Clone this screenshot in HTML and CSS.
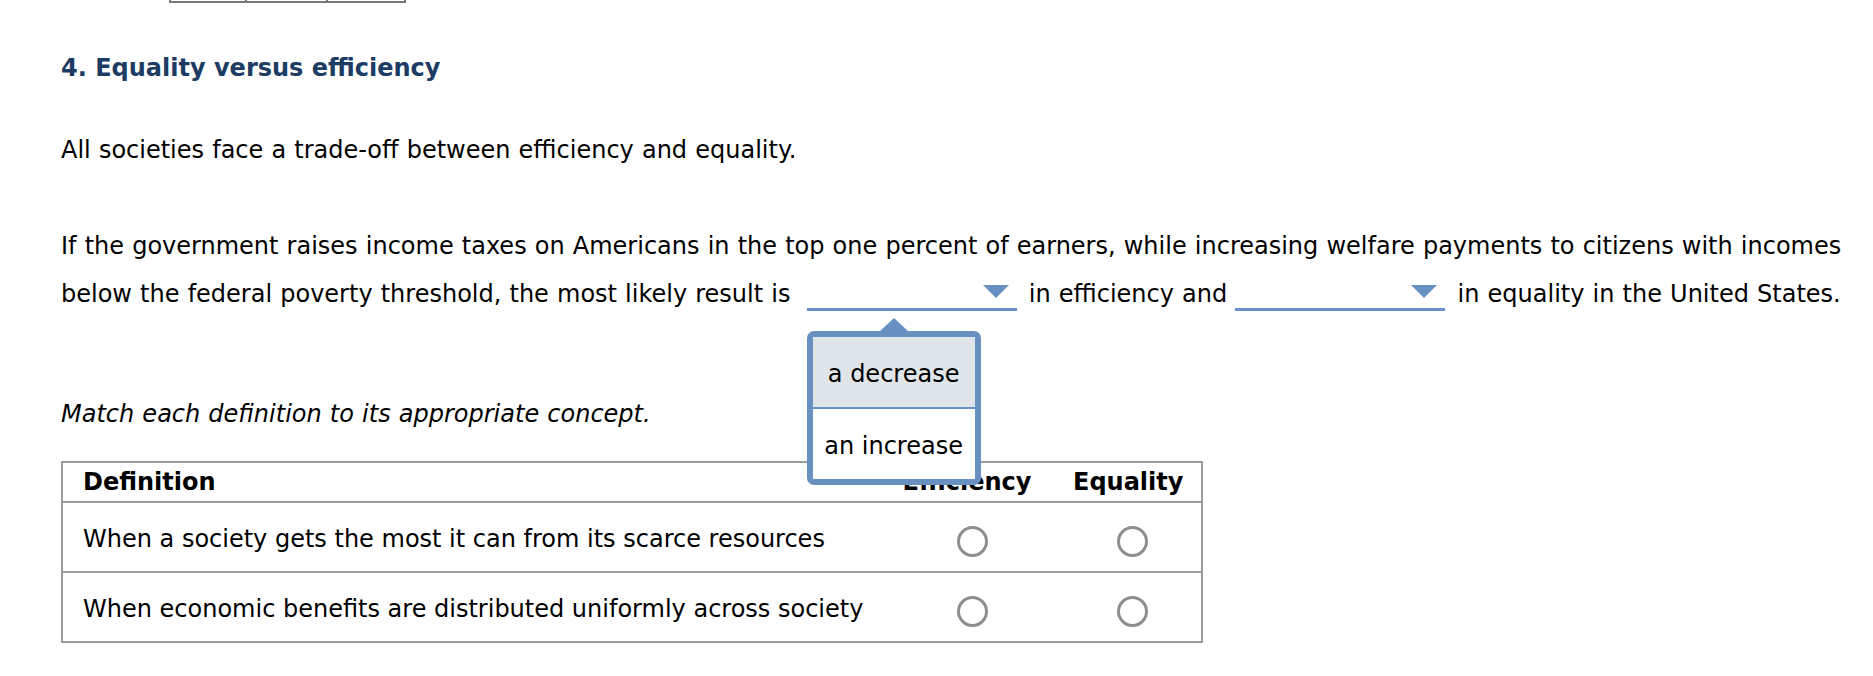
FILE: index.html
```html
<!DOCTYPE html>
<html lang="en">
<head>
<meta charset="utf-8">
<title>Equality versus efficiency</title>
<link rel="stylesheet" href="styles.css">
</head>
<body>
<div class="page">
  <div class="prev-table">
    <span class="prev-cell c1"></span><span class="prev-cell c2"></span><span class="prev-cell c3"></span>
  </div>

  <h2 class="title">4. Equality versus efficiency</h2>

  <p class="text intro">All societies face a trade-off between efficiency and equality.</p>

  <p class="text question"><span class="seg">If the government raises income taxes on Americans in the top one percent of earners, while increasing welfare payments to citizens with incomes</span> <span class="seg">below the federal poverty threshold, the most likely result is</span> <span class="dropdown first"><span class="caret"></span><span class="popup"><span class="popup-arrow"></span><span class="popup-box"><span class="option selected">a decrease</span><span class="option">an increase</span></span></span></span> <span class="seg">in efficiency and</span> <span class="dropdown second"><span class="caret"></span></span> <span class="seg">in equality in the United States.</span></p>

  <p class="text instr">Match each definition to its appropriate concept.</p>

  <table class="match">
    <thead>
      <tr>
        <th class="def">Definition</th>
        <th class="eff">Efficiency</th>
        <th class="eq">Equality</th>
      </tr>
    </thead>
    <tbody>
      <tr>
        <td class="def">When a society gets the most it can from its scarce resources</td>
        <td class="radio-cell"><span class="radio"></span></td>
        <td class="radio-cell"><span class="radio"></span></td>
      </tr>
      <tr class="last">
        <td class="def">When economic benefits are distributed uniformly across society</td>
        <td class="radio-cell"><span class="radio"></span></td>
        <td class="radio-cell"><span class="radio"></span></td>
      </tr>
    </tbody>
  </table>
</div>
</body>
</html>
```

FILE: styles.css
```css
* {
  box-sizing: border-box;
}

html, body {
  margin: 0;
  padding: 0;
  background: #ffffff;
}

body {
  font-family: Verdana, "DejaVu Sans", sans-serif;
  font-size: 24px;
  color: #000000;
}

.page {
  padding: 0 12px 0 61px;
}

.prev-table {
  display: flex;
  margin-left: 108px;
  width: 239px;
}

.prev-cell {
  display: block;
  height: 3px;
  border: 2px solid #777777;
  border-top: none;
}

.prev-cell.c1 { width: 78px; }
.prev-cell.c2 { width: 83px; margin-left: -2px; }
.prev-cell.c3 { width: 80px; margin-left: -2px; }

.title {
  margin: 50px 0 0;
  font-size: 24px;
  line-height: 30px;
  font-weight: bold;
  color: #1c3c63;
}

.text {
  margin: 0;
  line-height: 48px;
  word-spacing: 0.5px;
}

.intro {
  margin-top: 43px;
}

.question {
  margin-top: 48px;
}

.instr {
  margin-top: 72px;
  font-style: italic;
}

.dropdown {
  position: relative;
  display: inline-block;
  width: 210px;
  height: 30px;
  padding: 4px 8px 0 0;
  border-bottom: 3px solid #6891c1;
  vertical-align: -9px;
  margin: 0 4px 0 8px;
}

.dropdown.second {
  margin-left: 0;
}

.caret {
  display: block;
  width: 0;
  height: 0;
  margin-left: auto;
  border-left: 13px solid transparent;
  border-right: 13px solid transparent;
  border-top: 13px solid #6891c1;
}

.popup {
  position: absolute;
  top: 100%;
  left: 0;
  margin-top: 10px;
  width: 174px;
  display: flex;
  flex-direction: column;
  align-items: center;
  z-index: 5;
  word-spacing: normal;
}

.popup-arrow {
  display: block;
  width: 0;
  height: 0;
  border-left: 14px solid transparent;
  border-right: 14px solid transparent;
  border-bottom: 13px solid #6891c1;
}

.popup-box {
  display: flex;
  flex-direction: column;
  width: 174px;
  border: 6px solid #6891c1;
  border-radius: 7px;
  background: #ffffff;
  overflow: hidden;
}

.option {
  display: flex;
  align-items: center;
  justify-content: center;
  height: 70px;
  padding-top: 4px;
  line-height: 28px;
  white-space: nowrap;
  background: #ffffff;
}

.option.selected {
  background: #dfe5e8;
  border-bottom: 2px solid #6891c1;
  height: 72px;
}

.match {
  margin-top: 23px;
  width: 1142px;
  border: 2px solid #9c9c9c;
  border-collapse: separate;
  border-spacing: 0;
  table-layout: fixed;
  font-size: 24px;
}

.match th,
.match td {
  border-bottom: 2px solid #9c9c9c;
  line-height: 28px;
}

.match tr.last td {
  border-bottom: none;
}

.match th {
  padding: 5px 20px;
  font-weight: bold;
  height: 40px;
}

.match th.def {
  text-align: left;
  width: 818px;
}

.match th.eff {
  width: 172px;
  text-align: center;
  white-space: nowrap;
}

.match th.eq {
  width: 148px;
  text-align: center;
  white-space: nowrap;
}

.match td.def {
  padding: 22px 20px 18px;
  height: 70px;
  white-space: nowrap;
}

.match tr.last td.def {
  height: 68px;
}

.match td.radio-cell {
  vertical-align: top;
  padding: 23px 0 0 10px;
}

.radio {
  display: block;
  width: 31px;
  height: 31px;
  margin: 0 auto;
  border: 3px solid #8e8e8e;
  border-radius: 50%;
  background: #ffffff;
}
```
